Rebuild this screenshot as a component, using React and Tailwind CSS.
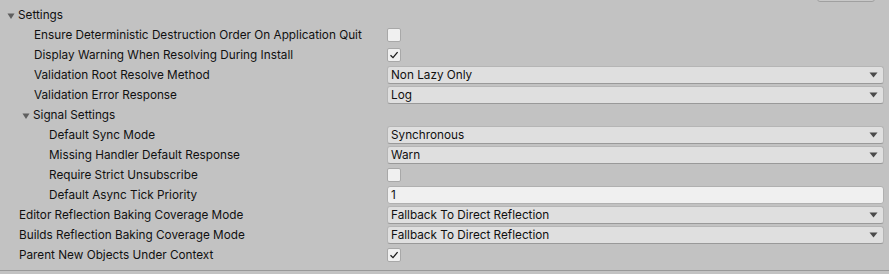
import React from "react";

const font = { fontFamily: "Inter, 'Noto Sans', sans-serif" };

function Arrow() {
  return (
    <svg width="9" height="6" viewBox="0 0 9 6" className="shrink-0">
      <path d="M0.5 0.5 L8.5 0.5 L4.5 5.5 Z" fill="#4a4a4a" />
    </svg>
  );
}

function Fold() {
  return (
    <svg width="8" height="8" viewBox="0 0 8 8" className="shrink-0">
      <path d="M0.5 1.5 L7.5 1.5 L4 7 Z" fill="#5f5f5f" />
    </svg>
  );
}

function Dropdown({ value }) {
  return (
    <div className="flex h-[18px] w-full items-center justify-between rounded-[3px] border border-[#b5b5b5] border-b-[#999999] bg-[#dfdfdf] pl-[3px] pr-[5px] text-[11.75px] text-[#101010]">
      <span className="pt-px leading-none">{value}</span>
      <Arrow />
    </div>
  );
}

function Check({ checked }) {
  return (
    <div className="flex h-[14px] w-[14px] items-center justify-center rounded-[2px] border border-[#a8a8a8] bg-[#f0f0f0]">
      {checked && (
        <svg width="10" height="10" viewBox="0 0 10 10">
          <path d="M1.5 5.2 L4 7.6 L8.6 2.2" fill="none" stroke="#1a1a1a" strokeWidth="1.3" />
        </svg>
      )}
    </div>
  );
}

function Field({ value }) {
  return (
    <div className="flex h-[18px] w-full items-center rounded-[3px] border border-[#b0b0b0] bg-[#f0f0f0] pl-[3px] text-[11.75px] text-[#101010]">
      <span className="pt-px leading-none">{value}</span>
    </div>
  );
}

function Row({ indent, label, children }) {
  return (
    <div className="flex h-[20px] items-center">
      <div className={`w-[387px] shrink-0 truncate pt-px text-[11.75px] text-[#101010] ${indent}`}>{label}</div>
      <div className="flex flex-1 items-center pr-[5px]">{children}</div>
    </div>
  );
}

export default function App() {
  return (
    <div className="relative h-[274px] w-[889px] overflow-hidden bg-[#c2c2c2]" style={font}>
      <div className="flex h-0 justify-end pr-[14px]">
        <div className="-mt-[20px] h-[22px] w-[58px] rounded-[3px] border border-[#a0a0a0] bg-[#c8c8c8]" />
      </div>
      <div className="flex flex-col pt-[5px]">
        <div className="flex h-[20px] items-center gap-[3px] pl-[7px] pt-px text-[11.75px] text-[#101010]">
          <Fold />
          <span>Settings</span>
        </div>
        <Row indent="pl-[34px]" label="Ensure Deterministic Destruction Order On Application Quit">
          <Check />
        </Row>
        <Row indent="pl-[34px]" label="Display Warning When Resolving During Install">
          <Check checked />
        </Row>
        <Row indent="pl-[34px]" label="Validation Root Resolve Method">
          <Dropdown value="Non Lazy Only" />
        </Row>
        <Row indent="pl-[34px]" label="Validation Error Response">
          <Dropdown value="Log" />
        </Row>
        <div className="flex h-[20px] items-center gap-[3px] pl-[22px] pt-px text-[11.75px] text-[#101010]">
          <Fold />
          <span>Signal Settings</span>
        </div>
        <Row indent="pl-[49px]" label="Default Sync Mode">
          <Dropdown value="Synchronous" />
        </Row>
        <Row indent="pl-[49px]" label="Missing Handler Default Response">
          <Dropdown value="Warn" />
        </Row>
        <Row indent="pl-[49px]" label="Require Strict Unsubscribe">
          <Check />
        </Row>
        <Row indent="pl-[49px]" label="Default Async Tick Priority">
          <Field value="1" />
        </Row>
        <Row indent="pl-[19px]" label="Editor Reflection Baking Coverage Mode">
          <Dropdown value="Fallback To Direct Reflection" />
        </Row>
        <Row indent="pl-[19px]" label="Builds Reflection Baking Coverage Mode">
          <Dropdown value="Fallback To Direct Reflection" />
        </Row>
        <Row indent="pl-[19px]" label="Parent New Objects Under Context">
          <Check checked />
        </Row>
        <div className="mt-[5px] h-px w-full bg-[#999999]" />
      </div>
    </div>
  );
}
